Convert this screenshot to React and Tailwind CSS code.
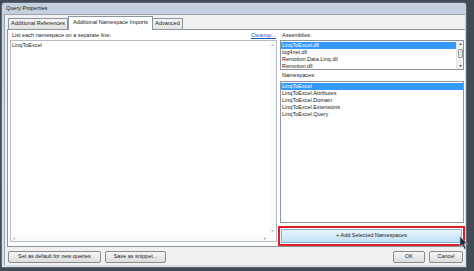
import React from "react";

const font = "font-['Liberation_Sans',Arial,sans-serif]";

function Tri({ dir, className }) {
  const pts = {
    up: "0,4 3,0 6,4",
    down: "0,0 3,4 6,0",
    left: "4,0 0,3 4,6",
    right: "0,0 4,3 0,6",
  }[dir];
  const box = dir === "up" || dir === "down" ? "0 0 6 4" : "0 0 4 6";
  const size = dir === "up" || dir === "down" ? "h-[2px] w-[3px]" : "h-[3px] w-[2px]";
  return (
    <svg viewBox={box} className={`${size} ${className}`}>
      <polygon points={pts} fill="currentColor" />
    </svg>
  );
}

function Btn({ children, className = "" }) {
  return (
    <div
      className={`flex h-[12px] items-center justify-center rounded-[2px] border border-[#8a8a8a] bg-gradient-to-b from-[#f6f6f6] to-[#dcdcdc] text-[#222] ${className}`}
    >
      {children}
    </div>
  );
}

const assemblies = ["LinqToExcel.dll", "log4net.dll", "Remotion.Data.Linq.dll", "Remotion.dll"];
const namespaces = [
  "LinqToExcel",
  "LinqToExcel.Attributes",
  "LinqToExcel.Domain",
  "LinqToExcel.Extensions",
  "LinqToExcel.Query",
];

export default function App() {
  return (
    <div className={`relative h-[271px] w-[474px] overflow-hidden bg-[#414b56] ${font} text-[5.5px] leading-none text-[#222]`}>
      <div className="ml-[1px] mt-[2px] flex h-[266px] w-[466px] flex-col rounded-t-[3px] border border-[#5e6a77] bg-gradient-to-b from-[#c3d0de] via-[#d3dde8] to-[#d6dfe9] pl-[2px] pr-[1px]">
        <div className="flex h-[11px] items-center pl-[2px] text-[#1a1a1a]">Query Properties</div>

        <div className="mb-[2px] flex flex-1 flex-col border-l border-t border-[#9aa5b1] bg-[#f0f0f0] pl-[2px]">
          {/* tab strip */}
          <div className="flex h-[14px] items-end pl-[1px]">
            <div className="flex h-[11px] w-[60px] items-center justify-center border border-b-0 border-[#8c96a0] bg-gradient-to-b from-[#f4f4f4] to-[#e2e2e2]">
              Additional References
            </div>
            <div className="relative z-10 -mb-px flex h-[14px] w-[85px] items-center justify-center border border-b-0 border-[#8c96a0] bg-white pb-[1px]">
              Additional Namespace Imports
            </div>
            <div className="flex h-[11px] w-[30px] items-center justify-center border border-b-0 border-l-0 border-[#8c96a0] bg-gradient-to-b from-[#f4f4f4] to-[#e2e2e2]">
              Advanced
            </div>
          </div>

          {/* tab panel */}
          <div className="flex h-[218px] gap-[3px] border border-r-0 border-[#8c96a0] bg-white pl-[2px] pt-[2px]">
            {/* left column */}
            <div className="flex w-[267px] flex-col pb-[4px]">
              <div className="flex h-[8px] items-center justify-between pl-[2px] pr-[1px]">
                <span>List each namespace on a separate line:</span>
                <span className="text-[#1a56c8] underline">Cleanup...</span>
              </div>
              <div className="flex flex-1 flex-col border border-[#b5bcc6]">
                <div className="flex flex-1">
                  <div className="flex-1 pl-[1px] pt-[2px]">LinqToExcel</div>
                  <div className="flex w-[7px] flex-col items-center justify-between bg-[#fbfbfb] py-[3px] text-[#b9b9b9]">
                    <Tri dir="up" />
                    <Tri dir="down" />
                  </div>
                </div>
                <div className="flex h-[6px] items-center justify-between bg-[#fbfbfb] pl-[2px] pr-[10px] text-[#b9b9b9]">
                  <Tri dir="left" />
                  <Tri dir="right" />
                </div>
              </div>
            </div>

            {/* right column */}
            <div className="flex w-[184px] flex-col">
              <div className="flex h-[8px] items-center pl-[2px]">Assemblies:</div>
              <div className="flex h-[30px] border border-[#8c96a0]">
                <div className="flex-1 pt-[1px]">
                  {assemblies.map((a, i) => (
                    <div
                      key={a}
                      className={`flex h-[7px] items-center pl-[1px] ${i === 0 ? "bg-[#3399ff] text-white" : ""}`}
                    >
                      {a}
                    </div>
                  ))}
                </div>
                <div className="flex w-[7px] flex-col items-center border-l border-[#e3e3e3] bg-[#f1f1f1] text-[#4e4e4e]">
                  <div className="flex h-[6px] items-center">
                    <Tri dir="up" />
                  </div>
                  <div className="mt-[2px] h-[9px] w-[5px] rounded-[1px] border border-[#9a9a9a] bg-gradient-to-r from-[#f2f2f2] to-[#d8d8d8]" />
                  <div className="mt-auto flex h-[6px] items-center">
                    <Tri dir="down" />
                  </div>
                </div>
              </div>
              <div className="flex h-[11px] items-center pl-[2px]">Namespaces:</div>
              <div className="h-[144px] border border-[#8c96a0] pt-[1px]">
                {namespaces.map((n, i) => (
                  <div
                    key={n}
                    className={`flex h-[7px] items-center pl-[1px] ${i === 0 ? "bg-[#3399ff] text-white" : ""}`}
                  >
                    {n}
                  </div>
                ))}
              </div>
              <div className="-ml-[2px] mt-[3px] h-[20px] w-[187px] border-2 border-[#dc1f2b] p-px">
                <div className="flex h-full items-center justify-center border border-[#7fb4d8] bg-gradient-to-b from-[#e8f5fd] to-[#bfe2f6] text-[#1a1a1a]">
                  + Add Selected Namespaces
                </div>
              </div>
            </div>
          </div>

          {/* bottom bar */}
          <div className="flex flex-1 items-center pl-[1px] pr-[2px] pt-[1px]">
            <Btn className="w-[93px]">Set as default for new queries</Btn>
            <Btn className="ml-[4px] w-[61px]">Save as snippet...</Btn>
            <Btn className="ml-auto w-[32px]">OK</Btn>
            <Btn className="ml-[4px] w-[34px]">Cancel</Btn>
          </div>
        </div>
      </div>

      {/* mouse pointer */}
      <svg viewBox="0 0 12 18" className="absolute left-[459px] top-[235px] h-[16px] w-[10px]">
        <path d="M1 1 L1 14 L4 11 L6.5 16.5 L8.5 15.5 L6 10 L10 10 Z" fill="#1d2a36" stroke="#cfd6de" strokeWidth="0.8" />
      </svg>
    </div>
  );
}
